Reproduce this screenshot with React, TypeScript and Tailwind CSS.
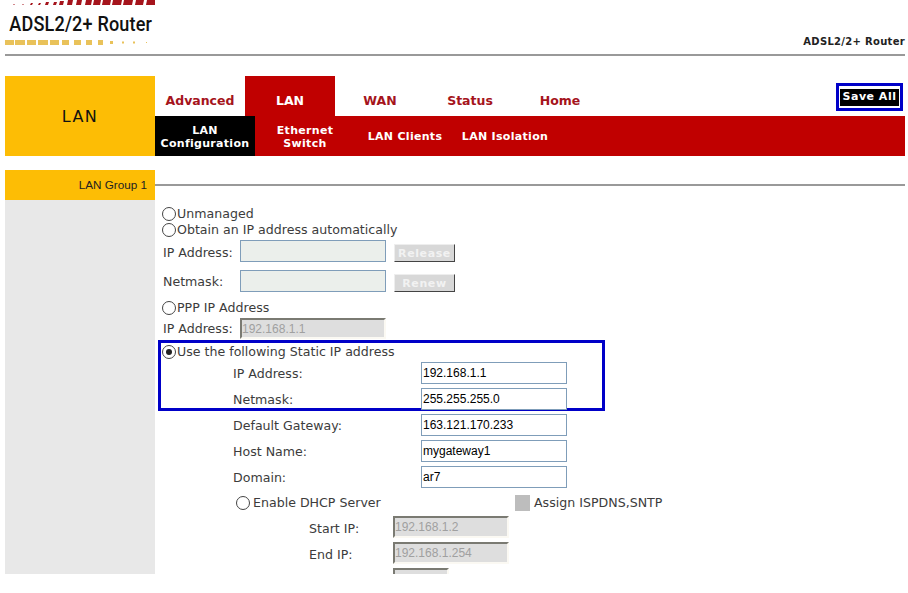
const tabs = ['Advanced', 'LAN', 'WAN', 'Status', 'Home'];

// [x, width] of the dashes in the logo
const redDashes = [
  [13, 1], [22, 1], [30, 2], [38, 2], [45, 3], [53, 3], [59, 4], [67, 5], [76, 5], [85, 6], [93, 7], [102, 8], [112, 9], [123, 9], [135, 8], [146, 9],
];
const yellowDashes = [
  [5, 9], [15, 10], [27, 9], [38, 10], [50, 9], [62, 7], [74, 7], [86, 6], [98, 5], [110, 3], [122, 2], [133, 2], [146, 1],
];

function Radio({ checked = false }: { checked?: boolean }) {
  return (
    <span className="flex w-[14px] h-[14px] shrink-0 items-center justify-center rounded-full border border-[#444] bg-white">
      {checked && <span className="w-[6px] h-[6px] rounded-full bg-[#222]" />}
    </span>
  );
}

function TextBox({ value }: { value: string }) {
  return (
    <input
      readOnly
      value={value}
      className="w-[146px] h-[22px] shrink-0 border border-[#7f9db9] bg-white px-[1px] text-[12px] text-black outline-none font-['Liberation_Sans',sans-serif]"
    />
  );
}

function DisabledBox({ value, width = 'w-[116px]' }: { value: string; width?: string }) {
  return (
    <input
      readOnly
      value={value}
      className={`${width} h-full shrink-0 border-2 border-t-[#7a7a72] border-l-[#7a7a72] border-r-[#fbf9f3] border-b-[#fbf9f3] bg-[#dedede] px-0 text-[12px] text-[#a0a0a0] outline-none font-['Liberation_Sans',sans-serif]`}
    />
  );
}

function EmptyBox() {
  return <div className="w-[146px] h-[22px] border border-[#7f9db9] bg-[#ebefeb]" />;
}

function GreyButton({ label }: { label: string }) {
  return (
    <div className="flex w-[61px] h-[18px] items-center justify-center border border-b-[#444] border-r-[#444] border-t-[#eee] border-l-[#eee] bg-[#d8d8d8] pt-[2px] text-[11px] font-bold tracking-[0.6px] text-[#f2f2f2]">
      {label}
    </div>
  );
}

function Row({ label, value }: { label: string; value: string }) {
  return (
    <div className="flex h-[22px] items-center pl-[75px]">
      <span className="w-[188px] pt-[2px]">{label}</span>
      <TextBox value={value} />
    </div>
  );
}

function DhcpRow({ label, value, width }: { label: string; value: string; width?: string }) {
  return (
    <div className="flex h-[22px] items-center pl-[151px]">
      <span className="w-[84px] pt-[5px]">{label}</span>
      <DisabledBox value={value} width={width} />
    </div>
  );
}

export default function App() {
  return (
    <div className="w-[908px] h-[593px] overflow-hidden bg-white text-[12.6px] text-[#3c3c3c] font-['DejaVu_Sans',sans-serif]">
      {/* logo + title */}
      <header className="ml-[5px] mr-[3px] h-[56px] flex justify-between border-b-2 border-[#999]">
        <div className="w-[150px]">
          <svg width="155" height="6" className="block -ml-[5px]">
            {redDashes.map(([x, w]) => (
              <polygon
                key={x}
                points={`${x + 1},${5 - Math.min(w, 5)} ${x + w + 1},${5 - Math.min(w, 5)} ${x + w},5 ${x},5`}
                fill="#a5141c"
              />
            ))}
          </svg>
          <div className="mt-[6px] pl-[5px] h-[25px] origin-left scale-x-[0.86] text-[21px] font-medium leading-[25px] tracking-[0.2px] whitespace-nowrap text-[#111] font-['Roboto',sans-serif]">
            ADSL2/2+ Router
          </div>
          <svg width="155" height="6" className="mt-[3px] block -ml-[5px]">
            {yellowDashes.map(([x, w]) => (
              <rect key={x} x={x} y={2.5 - Math.min(w, 5) / 2} width={w} height={Math.min(w, 5)} fill="#e9c25a" />
            ))}
          </svg>
        </div>
        <div className="self-end pb-[5px] text-[10px] font-bold tracking-[0.3px] text-[#222]">ADSL2/2+ Router</div>
      </header>

      {/* nav */}
      <div className="ml-[5px] mr-[3px] mt-[20px] flex h-[80px]">
        <div className="flex w-[150px] items-center justify-center bg-[#fdbd05] pt-[2px] text-[16px] tracking-[1.5px] text-[#111]">LAN</div>
        <div className="flex flex-1 flex-col">
          <div className="relative flex h-[40px]">
            {tabs.map((tab) => (
              <div
                key={tab}
                className={`flex w-[90px] items-center justify-center pt-[11px] text-[12.5px] font-bold ${
                  tab === 'LAN' ? 'bg-[#c00000] text-white' : 'text-[#a5141c]'
                }`}
              >
                {tab}
              </div>
            ))}
            <div className="absolute right-[2px] top-[7px] flex h-[28px] w-[67px] items-center justify-center border-[3px] border-[#0000c8] bg-white">
              <div className="flex h-[17px] w-[59px] items-center justify-center bg-black text-[11px] font-bold tracking-[0.5px] text-white">
                Save All
              </div>
            </div>
          </div>
          <div className="flex h-[40px] items-center bg-[#c00000] text-center text-[11px] font-bold leading-[13px] tracking-[0.3px] text-white">
            <div className="flex h-full w-[100px] items-center justify-center bg-black pt-[2px]">
              LAN
              <br />
              Configuration
            </div>
            <div className="w-[100px] pt-[2px]">
              Ethernet
              <br />
              Switch
            </div>
            <div className="w-[100px]">LAN Clients</div>
            <div className="w-[100px]">LAN Isolation</div>
          </div>
        </div>
      </div>

      {/* group row */}
      <div className="ml-[5px] mr-[3px] mt-[14px] flex h-[30px] items-center">
        <div className="flex h-full w-[150px] items-center justify-end pr-[8px] bg-[#fdbd05] text-[11.7px] text-[#222] font-['Liberation_Sans',sans-serif]">
          LAN Group 1
        </div>
        <div className="h-[2px] flex-1 bg-[#999]" />
      </div>

      {/* body */}
      <div className="ml-[5px] mr-[3px] flex h-[374px] overflow-hidden">
        <div className="w-[150px] shrink-0 bg-[#e8e8e8]" />
        <div className="ml-[3px] flex flex-1 flex-col">
          <div className="mt-[6px] flex h-[16px] shrink-0 items-center gap-[1px] pl-[4px]">
            <Radio />
            Unmanaged
          </div>
          <div className="flex h-[16px] shrink-0 items-center gap-[1px] pl-[4px]">
            <Radio />
            Obtain an IP address automatically
          </div>
          <div className="mt-[2px] flex h-[22px] shrink-0 items-center pl-[5px]">
            <span className="w-[77px] pt-[4px]">IP Address:</span>
            <EmptyBox />
            <div className="ml-[8px] self-end">
              <GreyButton label="Release" />
            </div>
          </div>
          <div className="mt-[8px] flex h-[22px] shrink-0 items-center pl-[5px]">
            <span className="w-[77px] pt-[2px]">Netmask:</span>
            <EmptyBox />
            <div className="ml-[8px] self-end">
              <GreyButton label="Renew" />
            </div>
          </div>
          <div className="mt-[8px] flex h-[16px] shrink-0 items-center gap-[1px] pl-[4px]">
            <Radio />
            PPP IP Address
          </div>
          <div className="mt-[2px] flex h-[21px] shrink-0 items-center pl-[5px]">
            <span className="w-[77px] pt-[2px]">IP Address:</span>
            <DisabledBox value="192.168.1.1" width="w-[146px]" />
          </div>

          <div className="relative mt-[5px] flex shrink-0 flex-col">
            <div className="absolute left-0 top-[-4px] h-[71px] w-[447px] border-[3px] border-[#0000c8]" />
            <div className="relative flex h-[16px] items-center gap-[1px] pl-[4px]">
              <Radio checked />
              Use the following Static IP address
            </div>
            <div className="relative mt-[2px] flex flex-col gap-[4px]">
              <Row label="IP Address:" value="192.168.1.1" />
              <Row label="Netmask:" value="255.255.255.0" />
              <Row label="Default Gateway:" value="163.121.170.233" />
              <Row label="Host Name:" value="mygateway1" />
              <Row label="Domain:" value="ar7" />
            </div>
          </div>

          <div className="mt-[7px] flex h-[16px] shrink-0 items-center pl-[78px]">
            <Radio />
            <span className="ml-[3px] w-[262px]">Enable DHCP Server</span>
            <span className="h-[16px] w-[15px] bg-[#bdbdbd]" />
            <span className="ml-[4px]">Assign ISPDNS,SNTP</span>
          </div>
          <div className="mt-[5px] flex shrink-0 flex-col gap-[4px]">
            <DhcpRow label="Start IP:" value="192.168.1.2" />
            <DhcpRow label="End IP:" value="192.168.1.254" />
            <DhcpRow label="" value="1000" width="w-[56px]" />
          </div>
        </div>
      </div>
    </div>
  );
}
